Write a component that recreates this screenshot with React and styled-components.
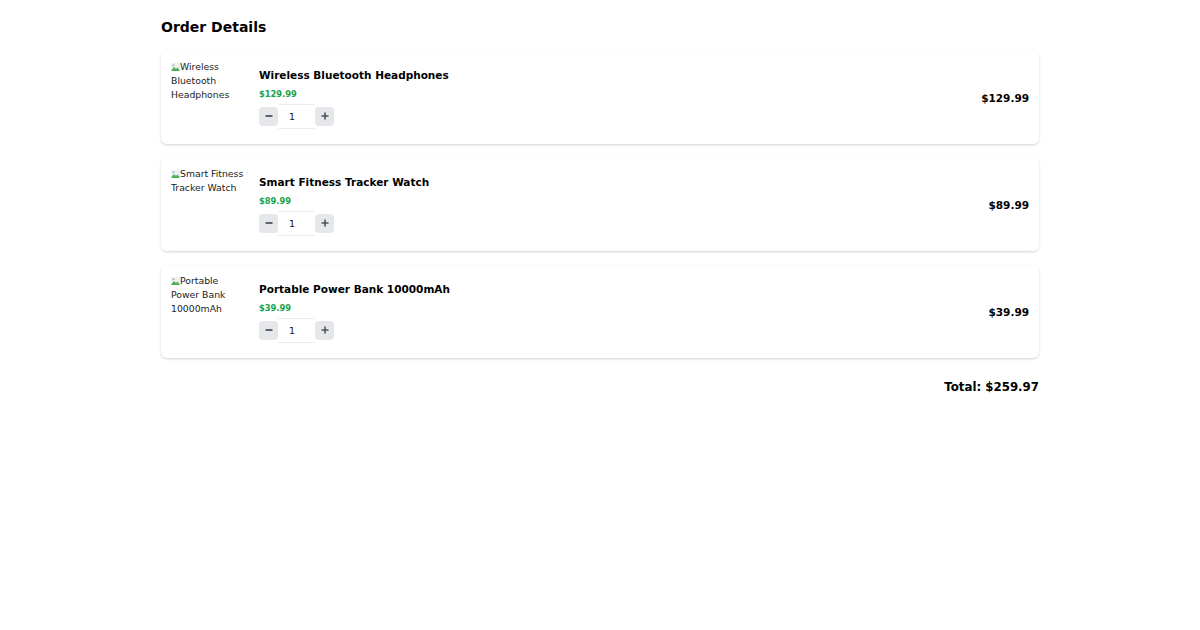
import React from "react";
import styled, { createGlobalStyle } from "styled-components";

const Global = createGlobalStyle`
  html, body { margin: 0; padding: 0; background: #ffffff; }
  body { font-family: "DejaVu Sans", sans-serif; color: #000; }
`;

const Page = styled.div`
  width: 878px;
  margin: 0 auto;
  padding-top: 17px;
`;

const Title = styled.h2`
  margin: 0 0 14px;
  font-size: 14px;
  line-height: 20px;
  font-weight: 700;
`;

const List = styled.div`
  display: flex;
  flex-direction: column;
  gap: 14px;
`;

const Card = styled.div`
  display: flex;
  align-items: center;
  padding: 9px 10px;
  background: #fff;
  border-radius: 6px;
  box-shadow: 0 1px 3px rgba(0, 0, 0, 0.12), 0 1px 2px rgba(0, 0, 0, 0.06);
`;

const ImageBox = styled.div`
  width: 76px;
  height: 75px;
  margin-right: 12px;
  flex-shrink: 0;
  font-size: 9.3px;
  line-height: 14px;
  color: #222;
  overflow: hidden;
`;

const BrokenIcon = styled.svg`
  width: 9px;
  height: 8px;
  vertical-align: -1px;
`;

const Info = styled.div`
  flex: 1;
  display: flex;
  flex-direction: column;
  padding-top: 1px;
`;

const Name = styled.div`
  font-size: 10.5px;
  font-weight: 700;
  line-height: 14px;
`;

const UnitPrice = styled.div`
  margin-top: 6px;
  font-size: 8.3px;
  font-weight: 700;
  color: #16a34a;
  line-height: 12px;
`;

const Qty = styled.div`
  display: flex;
  align-items: center;
  margin-top: 4px;
`;

const QtyButton = styled.button`
  width: 19px;
  height: 19px;
  padding: 0;
  border: none;
  border-radius: 4px;
  background: #e5e7eb;
  color: #4b5563;
  display: flex;
  align-items: center;
  justify-content: center;
  cursor: pointer;
`;

const QtyValue = styled.div`
  width: 37px;
  height: 23px;
  border-top: 1px solid #ececec;
  border-bottom: 1px solid #ececec;
  display: flex;
  align-items: center;
  justify-content: flex-start;
  text-indent: 11px;
  font-size: 9.5px;
  color: #111;
`;

const LinePrice = styled.div`
  font-size: 10.5px;
  font-weight: 700;
`;

const TotalRow = styled.div`
  display: flex;
  justify-content: flex-end;
  margin-top: 22px;
  font-size: 11.8px;
  font-weight: 700;
`;

const items = [
  { name: "Wireless Bluetooth Headphones", price: 129.99, qty: 1 },
  { name: "Smart Fitness Tracker Watch", price: 89.99, qty: 1 },
  { name: "Portable Power Bank 10000mAh", price: 39.99, qty: 1 },
];

const Broken = () => (
  <BrokenIcon viewBox="0 0 9 8">
    <rect x="0" y="0" width="9" height="8" fill="#eef0f2" />
    <path d="M0 8 L3 4 L5 6 L6.5 4.5 L9 8 Z" fill="#4caf50" />
    <circle cx="2.5" cy="2.2" r="0.9" fill="#9ab" />
  </BrokenIcon>
);

const Minus = () => (
  <svg width="10" height="10" viewBox="0 0 10 10">
    <path d="M1.5 5 H8.5" stroke="#4b5563" strokeWidth="1.8" />
  </svg>
);
const Plus = () => (
  <svg width="10" height="10" viewBox="0 0 10 10">
    <path d="M1.5 5 H8.5 M5 1.5 V8.5" stroke="#4b5563" strokeWidth="1.6" />
  </svg>
);

export default function App() {
  const total = items.reduce((s, i) => s + i.price * i.qty, 0);
  return (
    <>
      <Global />
      <Page>
        <Title>Order Details</Title>
        <List>
          {items.map((it) => (
            <Card key={it.name}>
              <ImageBox>
                <Broken />
                {it.name}
              </ImageBox>
              <Info>
                <Name>{it.name}</Name>
                <UnitPrice>${it.price.toFixed(2)}</UnitPrice>
                <Qty>
                  <QtyButton aria-label="decrease"><Minus /></QtyButton>
                  <QtyValue>{it.qty}</QtyValue>
                  <QtyButton aria-label="increase"><Plus /></QtyButton>
                </Qty>
              </Info>
              <LinePrice>${(it.price * it.qty).toFixed(2)}</LinePrice>
            </Card>
          ))}
        </List>
        <TotalRow>Total: ${total.toFixed(2)}</TotalRow>
      </Page>
    </>
  );
}
